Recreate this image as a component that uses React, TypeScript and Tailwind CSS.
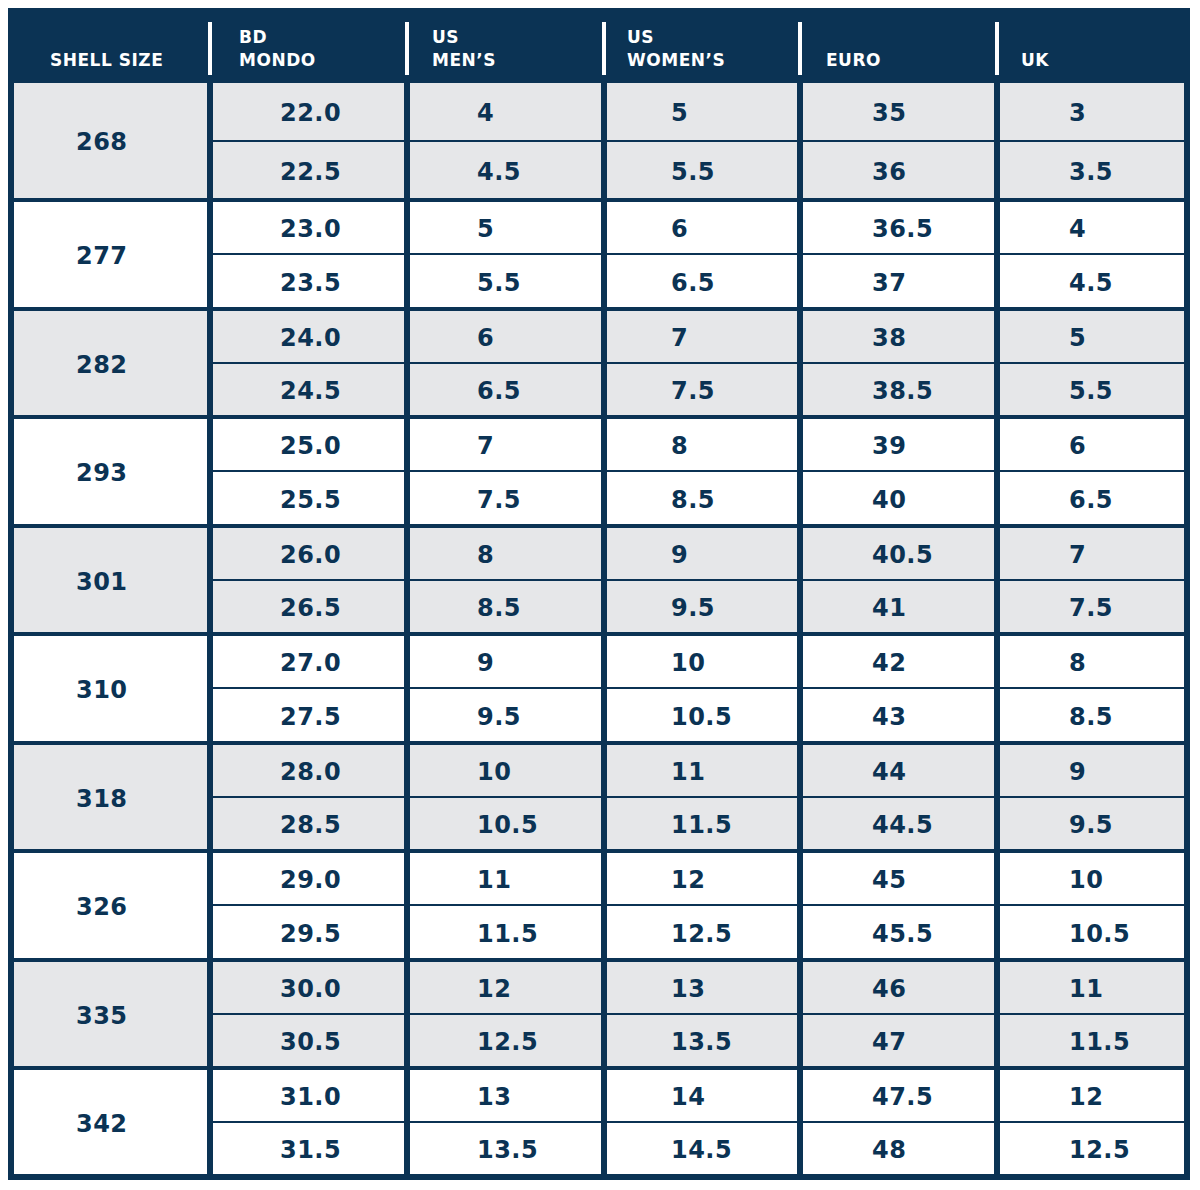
import React from "react";

type Group = { shell: string; rows: [string[], string[]]; gray: boolean };

const data: Group[] = [
  { shell: "268", rows: [["22.0", "4", "5", "35", "3"], ["22.5", "4.5", "5.5", "36", "3.5"]], gray: true },
  { shell: "277", rows: [["23.0", "5", "6", "36.5", "4"], ["23.5", "5.5", "6.5", "37", "4.5"]], gray: false },
  { shell: "282", rows: [["24.0", "6", "7", "38", "5"], ["24.5", "6.5", "7.5", "38.5", "5.5"]], gray: true },
  { shell: "293", rows: [["25.0", "7", "8", "39", "6"], ["25.5", "7.5", "8.5", "40", "6.5"]], gray: false },
  { shell: "301", rows: [["26.0", "8", "9", "40.5", "7"], ["26.5", "8.5", "9.5", "41", "7.5"]], gray: true },
  { shell: "310", rows: [["27.0", "9", "10", "42", "8"], ["27.5", "9.5", "10.5", "43", "8.5"]], gray: false },
  { shell: "318", rows: [["28.0", "10", "11", "44", "9"], ["28.5", "10.5", "11.5", "44.5", "9.5"]], gray: true },
  { shell: "326", rows: [["29.0", "11", "12", "45", "10"], ["29.5", "11.5", "12.5", "45.5", "10.5"]], gray: false },
  { shell: "335", rows: [["30.0", "12", "13", "46", "11"], ["30.5", "12.5", "13.5", "47", "11.5"]], gray: true },
  { shell: "342", rows: [["31.0", "13", "14", "47.5", "12"], ["31.5", "13.5", "14.5", "48", "12.5"]], gray: false },
];

const colW = ["w-[191px] pl-[67px]", "w-[191px] pl-[67px]", "w-[190px] pl-[64px]", "w-[191px] pl-[69px]", "w-[184px] pl-[69px]"];

const font = { fontFamily: "'DejaVu Sans', sans-serif" };

function Divider() {
  return (
    <div className="w-[6px] flex justify-center">
      <div className="w-[4px] mt-[14px] h-[53px] bg-white" />
    </div>
  );
}

function HeaderCell({ w, lines }: { w: string; lines: string[] }) {
  return (
    <div className={`${w} flex flex-col justify-end pb-[11px] text-white text-[17px] leading-[23px] font-bold tracking-[0.03em]`}>
      {lines.map((l) => (
        <div key={l}>{l}</div>
      ))}
    </div>
  );
}

export default function App() {
  return (
    <div className="min-h-[1190px] bg-white p-[8px]" style={font}>
      <div className="w-[1182px] bg-[#0b3354] px-[6px] pb-[6px]">
        <div className="flex h-[75px]">
          <HeaderCell w="w-[193px] pl-[36px]" lines={["SHELL SIZE"]} />
          <Divider />
          <HeaderCell w="w-[191px] pl-[26px]" lines={["BD", "MONDO"]} />
          <Divider />
          <HeaderCell w="w-[191px] pl-[22px]" lines={["US", "MEN’S"]} />
          <Divider />
          <HeaderCell w="w-[190px] pl-[20px]" lines={["US", "WOMEN’S"]} />
          <Divider />
          <HeaderCell w="w-[191px] pl-[23px]" lines={["EURO"]} />
          <Divider />
          <HeaderCell w="w-[184px] pl-[21px]" lines={["UK"]} />
        </div>
        <div className="flex flex-col gap-[4px]">
          {data.map((g, gi) => {
            const bg = g.gray ? "bg-[#e6e7e9]" : "bg-white";
            const hA = gi === 0 ? "h-[57px]" : "h-[51px]";
            const hB = gi === 0 ? "h-[56px]" : gi % 2 === 1 && gi < 9 ? "h-[52px]" : "h-[51px]";
            return (
              <div key={g.shell} className="flex gap-[6px]">
                <div className={`w-[193px] ${bg} flex items-center pl-[62px] pt-[3px] text-[#0b3354] text-[24px] font-bold tracking-[0.02em]`}>
                  {g.shell}
                </div>
                {colW.map((cw, ci) => (
                  <div key={ci} className={`${cw.split(" ")[0]} flex flex-col gap-[2px]`}>
                    {[0, 1].map((ri) => (
                      <div
                        key={ri}
                        className={`${ri === 0 ? hA : hB} ${bg} ${cw.split(" ")[1]} flex items-center pt-[3px] text-[#0b3354] text-[24px] font-bold tracking-[0.02em]`}
                      >
                        {g.rows[ri][ci]}
                      </div>
                    ))}
                  </div>
                ))}
              </div>
            );
          })}
        </div>
      </div>
    </div>
  );
}
